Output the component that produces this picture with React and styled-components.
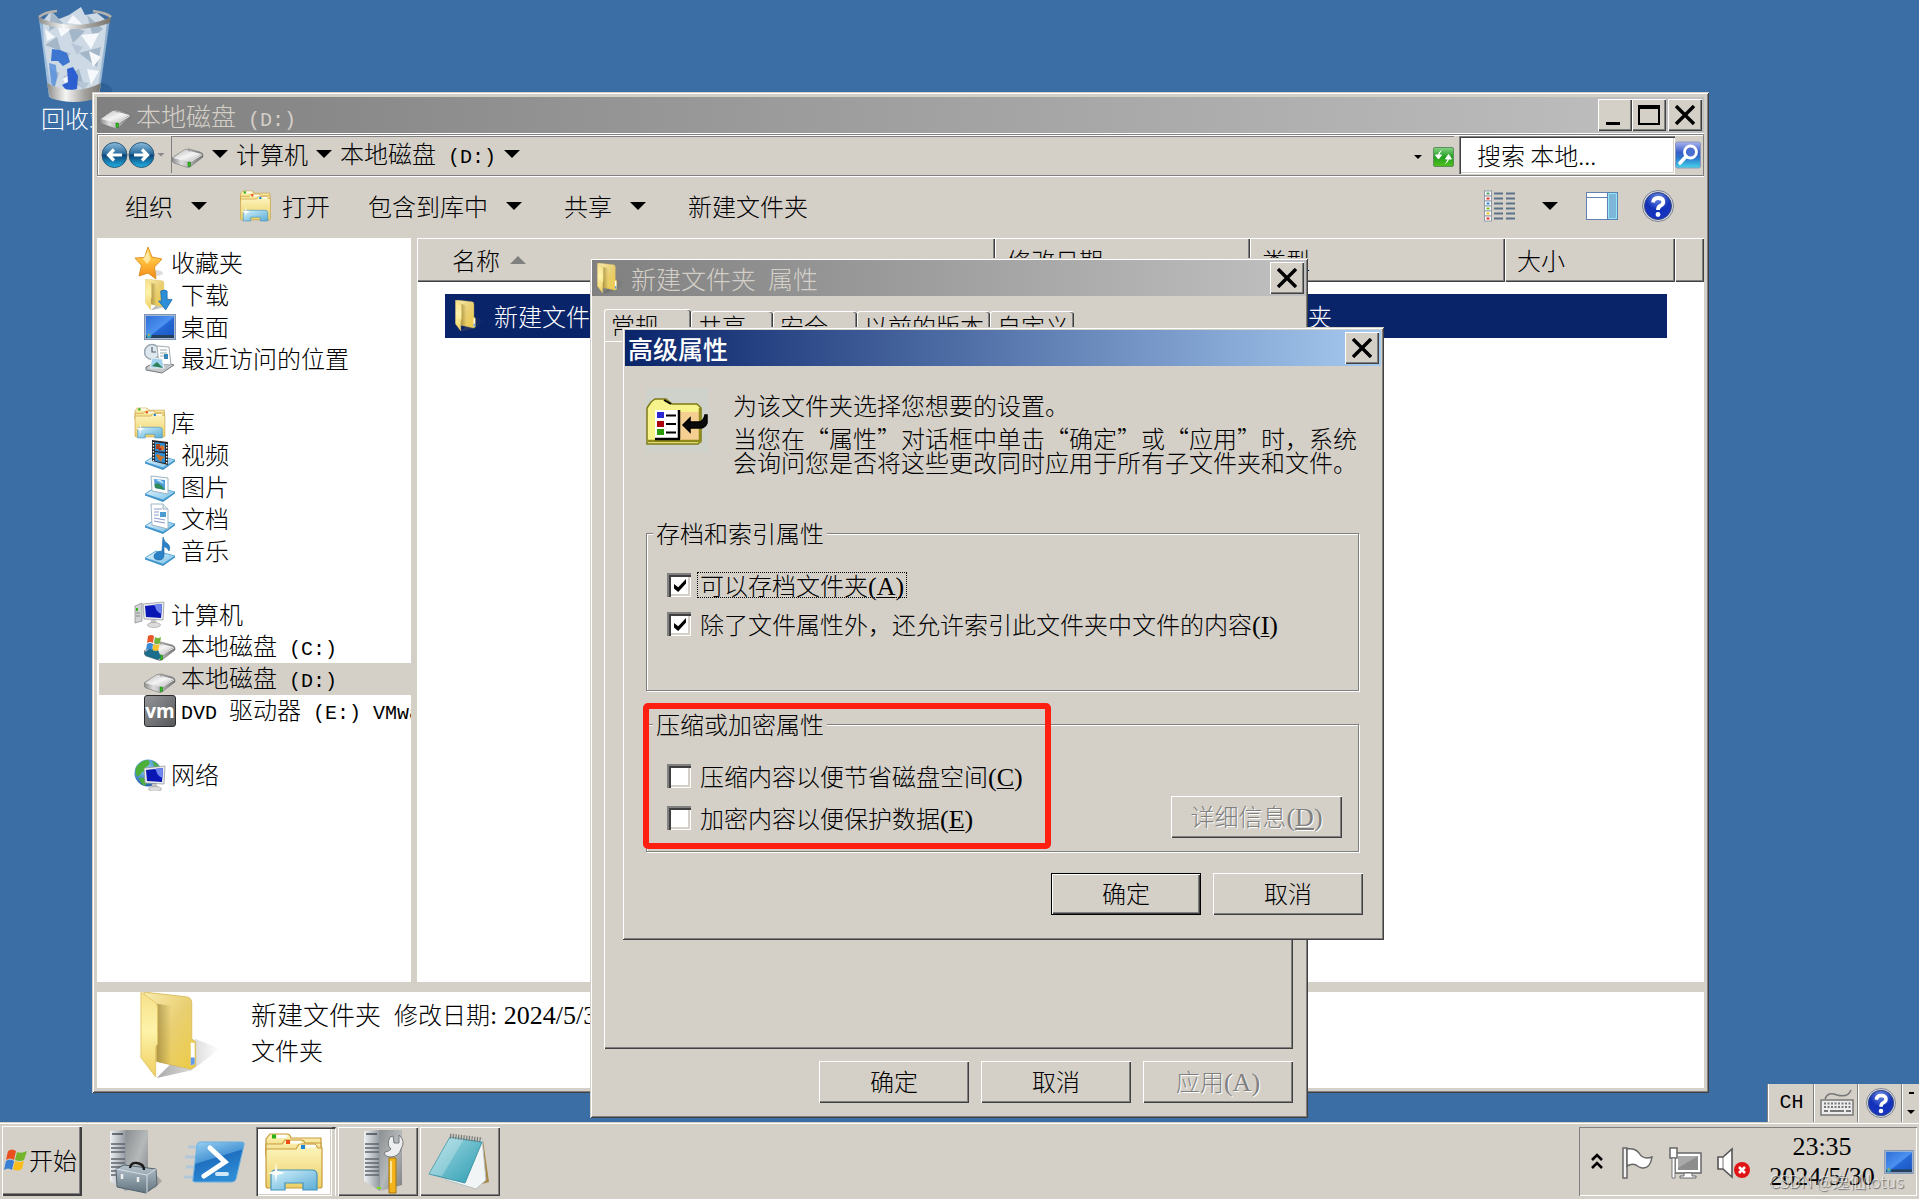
import React from "react";
import styled, { createGlobalStyle, css } from "styled-components";

const FACE = "#d4d0c8";
const SHADOW = "#808080";
const DARK = "#404040";
const NAVY = "#0a246a";

const GlobalStyle = createGlobalStyle`
  *, *::before, *::after { box-sizing: border-box; }
  body {
    margin: 0;
    background: #3a6ea5;
    color: #000;
    font-family: "Noto Sans CJK SC", "Liberation Sans", sans-serif;
    font-size: 24px;
    font-weight: 300;
    line-height: 24px;
  }
  button, input {
    font: inherit;
    color: inherit;
    border: 0;
    border-radius: 0;
    padding: 0;
    margin: 0;
    background: none;
  }
  svg { display: block; flex: none; }
`;

/* ---------- text ---------- */

const Half = styled.span`
  font-family: "Liberation Mono", monospace;
  font-size: 20px;
  line-height: 20px;
  white-space: pre;
`;

const Roman = styled.span`
  font-family: "Liberation Serif", serif;
  font-size: 26px;
  line-height: 20px;
  white-space: pre;
`;

/* Sets the Latin runs of a label in their own face. */
function T({ as: Run = Half, children }) {
  const runs = String(children).match(/[\x20-\x7e]+|[^\x20-\x7e]+/g) || [];
  return runs.map((r, i) => (/^[\x20-\x7e]/.test(r) ? <Run key={i}>{r}</Run> : <React.Fragment key={i}>{r}</React.Fragment>));
}

/* ---------- icons ---------- */

const Folder = ({ h = 32, arrow }) => (
  <svg width={Math.round((h * 84) / 90)} height={h} viewBox="0 0 84 90">
    <defs>
      <linearGradient id="fFlap" x1="0" y1="0" x2="0" y2="1"><stop offset="0" stopColor="#f7e08a" /><stop offset=".45" stopColor="#fdf3a9" /><stop offset="1" stopColor="#efcf60" /></linearGradient>
      <linearGradient id="fBack" x1="0" y1="0" x2="1" y2="1"><stop offset="0" stopColor="#f9ecae" /><stop offset=".5" stopColor="#e9cf72" /><stop offset="1" stopColor="#eccb45" /></linearGradient>
      <linearGradient id="fShade" x1="0" y1="0" x2="1" y2="0"><stop offset="0" stopColor="#9c8436" stopOpacity=".75" /><stop offset="1" stopColor="#9c8436" stopOpacity="0" /></linearGradient>
      <linearGradient id="fDrop" x1="0" y1="0" x2="1" y2="0"><stop offset="0" stopColor="#555" stopOpacity=".5" /><stop offset="1" stopColor="#555" stopOpacity="0" /></linearGradient>
    </defs>
    <path d="M17 88 53 80 82 58 57 48Z" fill="url(#fDrop)" />
    <path d="M4 0 48 5Q53 6 53 11V48L57 51V76L52 79 17 71Z" fill="url(#fBack)" stroke="#d9bd62" />
    <path d="M17 12 32 14V75L17 71Z" fill="url(#fShade)" />
    <path d="M52 52h4v22l-4 1z" fill="#fff" />
    <path d="M52 67h4v7l-4 1z" fill="#5f9bea" />
    <path d="M1 0 16 11Q18 13 18 16V53L16 56V87L1 67Z" fill="url(#fFlap)" stroke="#e3c567" />
    {arrow && <path d="M44 34q10-6 18 0v24h14L58 87 38 62h8z" fill="#2d8fd8" stroke="#1466a8" strokeWidth="2" />}
  </svg>
);

const Drive = ({ win }) => (
  <svg width="32" height="32" viewBox="0 0 32 32">
    <defs>
      <linearGradient id="dTop" x1="0" y1="0" x2="1" y2="1"><stop offset="0" stopColor="#b9b9b9" /><stop offset=".5" stopColor="#f4f4f4" /><stop offset="1" stopColor="#b4b4b4" /></linearGradient>
      <linearGradient id="dSide" x1="0" y1="0" x2="1" y2="0"><stop offset="0" stopColor="#8a8a8a" /><stop offset=".3" stopColor="#dedede" /><stop offset="1" stopColor="#707070" /></linearGradient>
    </defs>
    <path d="M0 20 12 12Q14 11 17 11L28 14Q31 15 31 17V19L18 29Q16 30 14 29L2 25Q0 24 0 22Z" fill="url(#dSide)" stroke="#757575" strokeWidth=".6" />
    <path d="M1 20 13 12 30 16 17 24Z" fill="url(#dTop)" />
    <path d="M16 25 30 17" stroke="#fff" strokeWidth=".8" />
    <circle cx="17" cy="12.500" r=".9" fill="#999" />
    <rect x="16" y="24" width="2.500" height="4.500" fill="#2fbf1b" stroke="#176b0e" strokeWidth=".5" />
    {win && (
      <g>
        <path d="M0 22 6 17 14 19 17 26 14 29 2 25Z" fill="#1c6d8c" />
        <path d="M4 5q3-2 6 0l-1 7q-3-2-6 0z" fill="#e8572a" />
        <path d="M11 6q3 2 6 0l-1 6q-3 2-6 0z" fill="#73b43a" />
        <path d="M3 13q3-2 6 0l-1 6q-3-2-6 0z" fill="#3b8ad8" />
        <path d="M9.500 13q3 2 6 0l-1 6q-3 2-6 0z" fill="#f7c331" />
      </g>
    )}
  </svg>
);

const Star = () => (
  <svg width="32" height="32" viewBox="0 0 32 32">
    <defs><linearGradient id="star" x1="0" y1="0" x2="0" y2="1"><stop offset="0" stopColor="#ffdf6b" /><stop offset=".5" stopColor="#ffb938" /><stop offset="1" stopColor="#f28a18" /></linearGradient></defs>
    <ellipse cx="22" cy="26" rx="7" ry="3" fill="#0002" />
    <path d="M14 0 18 10 28 12 20.500 20 22 32 14 26 5 29 7.500 18.500 1 11 10.500 10.500Z" fill="url(#star)" stroke="#d98a1c" strokeWidth=".9" />
    <path d="M14 4 16.500 12.500 13 17 9 12Z" fill="#fff6c4" opacity=".7" />
  </svg>
);

const DesktopIcon = ({ w = 32, h = 26 }) => (
  <svg width={w} height={h} viewBox="0 0 32 26">
    <defs><linearGradient id="desk" x1="0" y1="0" x2="1" y2="1"><stop offset="0" stopColor="#2f6fd8" /><stop offset=".5" stopColor="#4d92f0" /><stop offset=".55" stopColor="#2567d6" /><stop offset="1" stopColor="#1a56c0" /></linearGradient></defs>
    <rect x=".5" y=".5" width="31" height="25" fill="#aab8d0" stroke="#7f93b5" />
    <rect x="2" y="2" width="28" height="22" fill="url(#desk)" />
    <rect x="2" y="21" width="28" height="3" fill="#24405e" />
    <circle cx="5" cy="21.500" r="2.500" fill="#3aa7c9" />
    <path d="M4 20h1.500v1.500H4z" fill="#f0a030" />
  </svg>
);

const Recent = () => (
  <svg width="32" height="32" viewBox="0 0 32 32">
    <path d="M2 24 14 18 30 22 18 30 2 27Z" fill="#c4c8cb" stroke="#74797d" />
    <circle cx="8" cy="9" r="7.500" fill="#dde7ee" stroke="#9aa8b2" strokeWidth="1.500" />
    <path d="M8 4v5h4" fill="none" stroke="#55626c" strokeWidth="1.200" />
    <path d="M13 3 25 4 27 22 15 21Z" fill="#fff" stroke="#a3abb0" />
    <path d="M16 7h7M16 10h7M16 13h4" stroke="#9aa" strokeWidth="1" />
    <path d="M20 11h4v5h-4z" fill="#3487b8" />
    <path d="M8 15 18 16 20 25 6 25Z" fill="#9fd2ee" stroke="#eee" />
    <path d="M8 23 13 19 19 25Z" fill="#2f7f5b" />
  </svg>
);

const Tray = ({ children }) => (
  <svg width="32" height="32" viewBox="0 0 32 32">
    <defs><linearGradient id="tray" x1="0" y1="0" x2="1" y2="1"><stop offset="0" stopColor="#e9f7ff" /><stop offset="1" stopColor="#76bfe8" /></linearGradient></defs>
    <path d="M1 23 12 16 31 21 19 29Z" fill="url(#tray)" stroke="#5aaad8" />
    <path d="M1 23v1.500L19 31 31 22.500V21L19 29Z" fill="#3f93c8" />
    {children}
  </svg>
);

const Video = () => (
  <Tray>
    <path d="M8 1 24 3V26L8 22Z" fill="#26262a" />
    <path d="M11 3 21 4.500V13L11 12Z" fill="#2f8fd6" />
    <path d="M11 13 21 14.500V24L11 22Z" fill="#2f8fd6" />
    <path d="M12 5h4v5h-4z" fill="#a8461c" /><circle cx="18" cy="9" r="2.500" fill="#d9762c" /><circle cx="16" cy="10" r="1.500" fill="#a82a1c" />
    <path d="M12 16q3-2 5 1l4 1-3 2-1 3-3-3z" fill="#c9742a" />
    <path d="M9.500 3v19M22.700 5v20" stroke="#eee" strokeWidth="1.400" strokeDasharray="1.500 1.500" />
  </Tray>
);
const Picture = () => (
  <Tray>
    <path d="M7 5 24 7V23L8 20Z" fill="#fdfdfd" stroke="#9db4c4" />
    <path d="M10 8 21 9V19L11 17Z" fill="#4f9fdc" />
    <path d="M10.500 13q5-3 10.500 6L11 17Z" fill="#2f8a5c" /><path d="M12 9q5-2 8 4z" fill="#cde8f8" />
  </Tray>
);
const Doc = () => (
  <Tray>
    <path d="M7 1 19 1 24 6V26L8 22Z" fill="#fff" stroke="#9db4c4" />
    <path d="M19 1V6H24" fill="#dfeaf2" stroke="#9db4c4" />
    <path d="M10 6 18 6M10 9h5M10 12h5M10 15 21 17M10 18 21 20" stroke="#8b9bd0" strokeWidth="1.100" />
    <path d="M16 9h6v5h-6z" fill="#4a9bd0" />
  </Tray>
);
const Music = () => (
  <Tray>
    <path d="M19 2q1 5 5 7 3 3 1 7-2-4-5-4.500V20q0 5-5 5t-5-4 8-5z" fill="#2a82c8" stroke="#165f9c" strokeWidth=".6" />
  </Tray>
);

const Library = ({ w = 32, h = 32 }) => (
  <svg width={w} height={h} viewBox="0 0 58 60">
    <defs>
      <linearGradient id="lib" x1="0" y1="0" x2="0" y2="1"><stop offset="0" stopColor="#fdf6c0" /><stop offset="1" stopColor="#ecd067" /></linearGradient>
      <linearGradient id="libB" x1="0" y1="0" x2="1" y2="1"><stop offset="0" stopColor="#d3f1fb" /><stop offset="1" stopColor="#5badd6" /></linearGradient>
    </defs>
    <g fill="url(#lib)" stroke="#c79a3c" strokeWidth="1.200">
      <path d="M1 18V7L5 2H22Q25 2 26 6H56V20H1Z" />
      <path d="M1 24V12H17L20 8H36Q39 8 40 11H56V24Z" />
      <path d="M1 54V17H31L34 12H50L53 16H57V54Q57 56 55 56H3Q1 56 1 54Z" />
    </g>
    <path d="M12 3h10v3H12zM26 9h10v2.500H26zM41 13h10v2.500H41z" fill="#fff" />
    <path d="M7 2.500h4v4H7z" fill="#28b018" /><path d="M21 8h4v4h-4z" fill="#ee4b16" /><path d="M36 13h4v4h-4z" fill="#2384d6" />
    <path d="M6 58V43Q6 38 11 38H47Q52 38 52 43V58H38V51H20V58Z" fill="url(#libB)" stroke="#4593bd" strokeWidth="1.200" />
    <path d="M11 30 12 39 20 41 12 43 11 51 10 43 3 41 10 39Z" fill="#fff" />
  </svg>
);

const Monitor = ({ x = 0, y = 0 }) => (
  <g transform={`translate(${x} ${y})`}>
    <path d="M0 2 21 0 20 18 1 17Z" fill="#e9eaec" stroke="#8c8f96" strokeWidth=".7" />
    <path d="M2 4 19 2 18 16 3 15Z" fill="#0b17b4" />
    <path d="M10 3 19 2 18.500 12Q13 10 12 4Z" fill="#6e85ef" />
    <path d="M8 18h5l1 5H7z" fill="#c4c4c4" />
    <ellipse cx="11" cy="23" rx="6.500" ry="2.500" fill="#dcdcdc" stroke="#999" strokeWidth=".6" />
  </g>
);
const Computer = () => (
  <svg width="32" height="32" viewBox="0 0 32 32">
    <path d="M1 7 8 4V22L1 24Z" fill="#d0d2d5" stroke="#84878c" strokeWidth=".7" />
    <path d="M2 9h2v3H2z" fill="#37b51c" /><path d="M2 14h4M2 17h4" stroke="#888" />
    <Monitor x={9} y={3} />
  </svg>
);
const Network = () => (
  <svg width="32" height="32" viewBox="0 0 32 32">
    <defs><radialGradient id="globe" cx=".4" cy=".3" r=".8"><stop offset="0" stopColor="#8fd6f7" /><stop offset="1" stopColor="#1450a0" /></radialGradient></defs>
    <circle cx="14" cy="14" r="13.500" fill="url(#globe)" />
    <path d="M3 7Q8 1 14 1 18 5 12 8 14 12 8 13 5 18 3 17 0 12 3 7ZM5 19q6-1 8 5l-2 3q-5-3-6-8zM18 2q6 2 8 7l-5-1z" fill="#4caf3a" />
    <Monitor x={10} y={7} />
  </svg>
);
const VmBox = styled.span`
  display: flex; align-items: center; justify-content: center;
  flex: none; width: 32px; height: 32px;
  border: 1px solid #2b2b2d; border-radius: 3px;
  background: linear-gradient(135deg, #929497, #58595c);
  color: #fff; font: bold 19px/28px "Open Sans", sans-serif;
`;

const Bin = () => (
  <svg width="76" height="96" viewBox="0 0 76 96">
    <defs>
      <linearGradient id="rim" x1="0" y1="0" x2="1" y2="0"><stop offset="0" stopColor="#8a8a88" /><stop offset=".35" stopColor="#f6f6f4" /><stop offset=".7" stopColor="#a3a19d" /><stop offset="1" stopColor="#77736e" /></linearGradient>
      <linearGradient id="glass" x1="0" y1="0" x2="1" y2="0"><stop offset="0" stopColor="#8fb4d6" /><stop offset=".5" stopColor="#d4e2ee" /><stop offset="1" stopColor="#86a9cb" /></linearGradient>
    </defs>
    <ellipse cx="60" cy="84" rx="15" ry="9" fill="#1d4a7a" opacity=".35" />
    <path d="M2 12 12 90Q37 98 62 90L73 12Z" fill="url(#glass)" />
    <path d="M6 14 14 4 22 12 32 8 44 0 48 8 60 6 70 14 67 40 61 80Q37 90 14 80L7 38Z" fill="#cdd9e5" />
    <path d="M14 5 26 16 12 24ZM30 18 48 24 36 36ZM50 8 66 22 56 30ZM8 38 20 30 24 44ZM42 46 64 40 60 60ZM26 70 42 62 48 82ZM12 60 22 66 18 80Z" fill="#a4b7c9" />
    <path d="M20 18 34 22 24 30ZM44 28 62 26 54 42ZM50 62 62 64 54 78ZM26 72 34 66 32 84ZM52 44 64 50 56 60ZM8 22 18 30 10 34ZM36 8 46 18 30 16Z" fill="#f6f9fb" />
    <path d="M34 36 46 40 40 48ZM24 44 34 46 30 54ZM40 74 52 76 46 84Z" fill="#b7c6d6" />
    <path d="M15 42 23 43 30 46 33 55 26 59 21 54 14 54Z" fill="#2e6ace" opacity=".9" />
    <path d="M12 56 19 58 20 70 17 82 14 76Z" fill="#5b93dd" opacity=".85" />
    <path d="M30 62 36 60 41 69 40 82 30 84 25 78 31 75Z" fill="#2558cf" opacity=".95" />
    <path d="M10 76Q37 90 64 76L61 91Q37 99 13 91Z" fill="url(#rim)" />
    <path d="M1 10Q37 26 74 10L73 16Q37 28 3 16Z" fill="url(#rim)" />
    <path d="M2 10Q8 5 20 4M56 4Q70 6 74 10" fill="none" stroke="#b5b2ae" strokeWidth="2.500" />
  </svg>
);

const BlueArrow = ({ flip }) => (
  <svg width="27" height="32" viewBox="0 0 27 32">
    <defs><linearGradient id="nav" x1="0" y1="0" x2="0" y2="1"><stop offset="0" stopColor="#8cbcdc" /><stop offset=".45" stopColor="#2b6d9f" /><stop offset=".5" stopColor="#0d4377" /><stop offset="1" stopColor="#21b4e6" /></linearGradient></defs>
    <circle cx="13.500" cy="16" r="12.500" fill="url(#nav)" stroke="#2d5878" />
    <g transform={flip ? "matrix(-1 0 0 1 27 0)" : undefined}>
      <path d="M21 16H8M13 10.500 7.500 16 13 21.500" fill="none" stroke="#fff" strokeWidth="3.200" />
    </g>
  </svg>
);

const Refresh = () => (
  <svg width="21" height="20" viewBox="0 0 21 20">
    <defs><linearGradient id="ref" x1="0" y1="0" x2="0" y2="1"><stop offset="0" stopColor="#86d486" /><stop offset=".5" stopColor="#22a022" /><stop offset="1" stopColor="#52c01e" /></linearGradient></defs>
    <rect x=".5" y=".5" width="20" height="19" rx="1.500" fill="url(#ref)" stroke="#5d8f5d" />
    <path d="M8.500 3.500Q5.500 5 5.500 9M2.500 8h6L5.500 12ZM12.500 16.500Q15.500 15 15.500 11M12.500 12h6L15.500 7.500Z" fill="#fff" stroke="#fff" />
  </svg>
);

const SearchIcon = () => (
  <svg width="26" height="28" viewBox="0 0 26 28">
    <defs><linearGradient id="sea" x1="0" y1="0" x2="0" y2="1"><stop offset="0" stopColor="#a9b4f3" /><stop offset=".4" stopColor="#3a5fc8" /><stop offset=".6" stopColor="#2b74cc" /><stop offset="1" stopColor="#48d6ea" /></linearGradient></defs>
    <rect x=".5" y="1" width="25" height="26" rx="2" fill="url(#sea)" stroke="#8a97b8" />
    <circle cx="15.500" cy="11" r="6" fill="#4a6fd0" stroke="#fff" strokeWidth="2.800" />
    <path d="M11 15.500 5 22" stroke="#fff" strokeWidth="3.600" strokeLinecap="round" />
  </svg>
);

const ViewIcon = () => {
  const dots = ["#5aa36a", "#e2382c", "#2c8be0", "#7bbf1e", "#e6c51c", "#e2382c"];
  return (
    <svg width="32" height="32" viewBox="0 0 32 32">
      {dots.map((c, i) => (
        <g key={c + i}>
          <rect x=".5" y={1 + i * 5} width="7" height="5" fill="#fff" stroke="#8f9bab" />
          <rect x="2.500" y={2.500 + i * 5} width="3" height="2" fill={c} />
          <path d={`M10 ${3.500 + i * 5}h9M22 ${3.500 + i * 5}h9`} stroke="#5b7289" strokeWidth="2" />
        </g>
      ))}
    </svg>
  );
};

const PreviewIcon = () => (
  <svg width="32" height="28" viewBox="0 0 32 28">
    <rect x=".5" y=".5" width="31" height="27" fill="#fff" stroke="#5f81b3" />
    <path d="M1 5.500h20" stroke="#5f81b3" />
    <rect x="21.500" y="1" width="10" height="26" fill="#7eb6d9" stroke="#5f81b3" />
    <path d="M22.500 1.500h8v25h-8z" fill="none" stroke="#8fe9f5" />
  </svg>
);

const Help = ({ size = 32 }) => (
  <svg width={size} height={size} viewBox="0 0 32 32">
    <defs><radialGradient id="help" cx=".5" cy=".2" r=".9"><stop offset="0" stopColor="#6f8fe6" /><stop offset=".5" stopColor="#1231b8" /><stop offset="1" stopColor="#1a35c8" /></radialGradient></defs>
    <circle cx="16" cy="16" r="15.500" fill="#d6dbe4" stroke="#7d8390" />
    <circle cx="16" cy="16" r="13.500" fill="url(#help)" stroke="#38477c" />
    <path d="M11 12.500Q11.500 8 16 8 21.300 8 21.300 12 21.300 14.500 18 16 16 17.200 16 20" fill="none" stroke="#fff" strokeWidth="3.800" />
    <circle cx="16" cy="24.500" r="2.400" fill="#fff" />
  </svg>
);

const AttrFolder = () => (
  <svg width="63" height="65" viewBox="0 0 63 65">
    <rect width="63" height="65" fill="#cfd2ca" />
    <path d="M1 20 5 14 9 11H20L26 16H51L55 20V53L52 56H1Z" fill="#f7f38c" stroke="#7d7a18" strokeWidth="1.500" />
    <path d="M34 24H53V52H28V38Z" fill="#f5cf92" />
    <path d="M2 53H54M54 20V55" stroke="#8e8b1c" strokeWidth="2.500" />
    <path d="M18 12 25 16" stroke="#000" strokeWidth="2" />
    <path d="M9 22H32V51H9Z" fill="#fff" />
    <path d="M33 22V51M9 51H34" stroke="#000" strokeWidth="2.500" />
    <path d="M11 24h7v6h-7z" fill="#2a28d0" /><path d="M11 33h7v6h-7z" fill="#a80510" /><path d="M11 41h7v6h-7z" fill="#2b9a08" />
    <path d="M20 27.500H30M20 36H30M20 44.500H30" stroke="#000" strokeWidth="2.200" />
    <path d="M37 37 44 30V34H53Q58 33 59 27H61V35Q59 40 54 40H44V44Z" fill="#0a0a0a" stroke="#000" strokeWidth="1.500" />
  </svg>
);

const Flag = () => (
  <svg width="36" height="36" viewBox="0 0 36 36">
    <path d="M4 4h4v30H4z" fill="#f3f3f3" stroke="#666" strokeWidth="1.500" />
    <path d="M8 5Q16 4 20 9 24 16 33 13 31 25 23 24 19 23 17 21 13 19 8 22Z" fill="#fff" stroke="#666" strokeWidth="1.500" />
  </svg>
);
const NetTray = () => (
  <svg width="36" height="36" viewBox="0 0 36 36">
    <rect x="8" y="9" width="26" height="20" fill="#fff" stroke="#666" strokeWidth="1.500" />
    <rect x="11" y="12" width="20" height="14" fill="#8d8d8d" /><path d="M11 12h20L11 24z" fill="#a9a9a9" />
    <path d="M17 29h8v3h4v2H13v-2h4z" fill="#fff" stroke="#666" />
    <path d="M3 4h7v10H3z" fill="#fff" stroke="#666" strokeWidth="1.500" /><path d="M5 14h3v20H5z" fill="#fff" stroke="#777" />
  </svg>
);
const Speaker = () => (
  <svg width="36" height="36" viewBox="0 0 36 36">
    <path d="M3 13h5L17 5V33L8 25H3Z" fill="#fff" stroke="#555" strokeWidth="1.600" /><path d="M8 13v12" stroke="#777" />
    <circle cx="27" cy="26" r="8" fill="#e01414" /><path d="M24 23 30 29M30 23 24 29" stroke="#fff" strokeWidth="2.600" />
  </svg>
);
const Keyboard = () => (
  <svg width="34" height="28" viewBox="0 0 34 28">
    <path d="M5 10Q8 2 17 6 28 9 31 1" fill="none" stroke="#777" strokeWidth="1.500" />
    <rect x="1" y="11" width="32" height="15" fill="#ececec" stroke="#777" strokeWidth="1.500" />
    <path d="M4 14.500h27M4 18h27" stroke="#777" strokeWidth="2" strokeDasharray="2 1.500" /><path d="M4 22h4M10 22h14M26 22h5" stroke="#777" strokeWidth="2" />
  </svg>
);
const WinFlag = () => (
  <svg width="24" height="24" viewBox="0 0 24 24">
    <path d="M4 3Q8 0 12 3L10 12Q6 9 2 12Z" fill="#e8501e" /><path d="M13 4Q17 6 23 3L20 12Q16 14 11 12Z" fill="#74b52b" />
    <path d="M2 13Q6 10 10 13L8 22Q4 19 0 22Z" fill="#3a7fd6" /><path d="M11 13Q15 15 20 13L18 21Q13 24 9 21Z" fill="#f9bd1b" />
  </svg>
);

const Tower = ({ x = 0 }) => (
  <g transform={`translate(${x} 0)`}>
    <path d="M16 1H38V56L16 62Z" fill="url(#towSide)" />
    <path d="M0 2 16 1V62L0 52Z" fill="url(#towFront)" />
    <path d="M1 15h14M1 19h14M1 23h14M1 30h14M1 34h14M1 38h14M1 42h14M1 46h14" stroke="#5e646b" strokeWidth="1.600" />
    <path d="M2 5h11" stroke="#3d4248" strokeWidth="1.400" />
  </g>
);
const TowerDefs = () => (
  <defs>
    <linearGradient id="towSide" x1="0" y1="0" x2="1" y2="1"><stop offset="0" stopColor="#8b8f91" /><stop offset=".5" stopColor="#b5b9ba" /><stop offset="1" stopColor="#7c8082" /></linearGradient>
    <linearGradient id="towFront" x1="0" y1="0" x2="1" y2="0"><stop offset="0" stopColor="#eef1f4" /><stop offset="1" stopColor="#8f969d" /></linearGradient>
    <linearGradient id="box" x1="0" y1="0" x2="0" y2="1"><stop offset="0" stopColor="#b5c3cd" /><stop offset="1" stopColor="#647580" /></linearGradient>
  </defs>
);
const ServerManager = () => (
  <svg width="64" height="66" viewBox="0 0 64 66">
    <TowerDefs />
    <Tower x={10} />
    <path d="M54 60 62 52 56 46z" fill="#0003" />
    <path d="M16 40 24 36 56 40 57 56 46 64 17 58Z" fill="url(#box)" stroke="#55646e" />
    <path d="M16 40 47 46 56 40M47 46V64" fill="none" stroke="#d5dee4" />
    <path d="M30 39Q31 33 37 34 44 35 44 41" fill="none" stroke="#1b1b1b" strokeWidth="2.400" />
    <path d="M22 45v5M38 48v5" stroke="#eee" strokeWidth="2.500" />
  </svg>
);
const ServerTools = () => (
  <svg width="64" height="66" viewBox="0 0 64 66">
    <TowerDefs />
    <Tower x={18} />
    <path d="M44 8Q40 16 45 20 44 22 39 23 37 27 44 28 53 28 55 20 60 12 53 6L53 14H48L47 7Z" fill="#eceef0" stroke="#77797c" />
    <path d="M43 29h7v35h-7z" fill="#f3b31b" stroke="#a8740c" /><path d="M45 32v22" stroke="#fff3b8" strokeWidth="1.600" />
    <path d="M31 58h4v2h-4z" fill="#7be01a" />
  </svg>
);
const PowerShell = () => (
  <svg width="64" height="50" viewBox="0 0 64 50">
    <defs><linearGradient id="ps" x1="0" y1="0" x2=".4" y2="1"><stop offset="0" stopColor="#9bd2f3" /><stop offset=".48" stopColor="#4b97d6" /><stop offset=".5" stopColor="#1f70c0" /><stop offset="1" stopColor="#2d8bd4" /></linearGradient></defs>
    <path d="M6 10h10M3 20h12M4 30h8M2 40h12" stroke="#8fc0e8" strokeWidth="3" opacity=".5" />
    <path d="M18 5H60Q63 5 62 8L54 42Q53 45 50 45H13Q10 45 11 42L15 8Q16 5 18 5Z" fill="url(#ps)" stroke="#6bb0e0" />
    <path d="M28 11 43 25 22 39" fill="none" stroke="#fff" strokeWidth="5" strokeLinecap="round" /><path d="M35 37h10" stroke="#cfe8f8" strokeWidth="4" strokeLinecap="round" />
  </svg>
);
const Notepad = () => (
  <svg width="64" height="60" viewBox="0 0 64 60">
    <defs><linearGradient id="np" x1="0" y1="0" x2="1" y2="1"><stop offset="0" stopColor="#a6dce4" /><stop offset=".5" stopColor="#69bccb" /><stop offset="1" stopColor="#2e9db3" /></linearGradient></defs>
    <path d="M55 8 61 50 54 52Z" fill="#a68545" />
    <path d="M54 6 58 48 48 57 18 48 40 20Z" fill="#f2f5f5" stroke="#b5bfc0" />
    <path d="M22 5 54 10 37 51 1 42Z" fill="url(#np)" stroke="#3f97a8" />
    <path d="M22 5 36 7 14 44 1 42Z" fill="#fff" opacity=".25" />
    <path d="M22 4 54 8" stroke="#777" strokeWidth="5" strokeDasharray="1.200 1.500" />
  </svg>
);

const Caret = styled.span`
  flex: none;
  width: ${(p) => (p.$small ? 8 : 16)}px;
  height: ${(p) => (p.$small ? 4 : 8)}px;
  background: ${(p) => p.$color || "#000"};
  clip-path: ${(p) => (p.$up ? "polygon(50% 0, 100% 100%, 0 100%)" : "polygon(0 0, 100% 0, 50% 100%)")};
`;

/* ---------- window chrome ---------- */

const raised = css`
  box-shadow: inset 1px 1px #fff, inset -1px -1px ${DARK}, inset -2px -2px ${SHADOW};
`;

const Desktop = styled.main`
  position: relative;
  display: flex;
  flex-direction: column;
  min-height: 100vh;
  overflow: hidden;
  background: #3a6ea5;
`;

const Shortcut = styled.button`
  display: flex;
  flex-direction: column;
  align-items: flex-start;
  gap: 3px;
  width: 120px;
  padding: 7px 0 0 37px;
  color: #fff;
  text-align: left;
  span { margin-left: 4px; white-space: nowrap; }
`;

const Frame = styled.section`
  position: absolute;
  left: ${(p) => p.$x}px;
  top: ${(p) => p.$y}px;
  width: ${(p) => p.$w}px;
  height: ${(p) => p.$h}px;
  display: flex;
  flex-direction: column;
  padding: ${(p) => p.$pad}px;
  background: ${FACE};
  box-shadow: inset 1px 1px ${FACE}, inset -1px -1px ${DARK}, inset 2px 2px #fff, inset -2px -2px ${SHADOW};
`;

const TitleBar = styled.header`
  display: flex;
  align-items: center;
  flex: none;
  height: 36px;
  padding: 0 2px 0 ${(p) => p.$left || 3}px;
  gap: ${(p) => p.$gap || 0}px;
  color: ${(p) => (p.$active ? "#fff" : FACE)};
  background: ${(p) => (p.$active ? `linear-gradient(90deg, ${NAVY}, #a6caf0)` : "linear-gradient(90deg, #808080, #c0c0c0)")};
  h1 {
    flex: 1;
    margin: 0;
    font-size: 25px;
    font-weight: ${(p) => (p.$active ? 500 : 300)};
    line-height: 32px;
    white-space: nowrap;
  }
`;

const Caption = styled.div`display: flex; gap: 2px;`;
const CaptionPair = styled.div`display: flex;`;
const CaptionButton = styled.button`
  display: flex;
  align-items: center;
  justify-content: center;
  width: 34px;
  height: 32px;
  background: ${FACE};
  ${raised}
`;
const CloseButton = () => (
  <CaptionButton aria-label="关闭">
    <svg width="20" height="20" viewBox="0 0 20 20"><path d="M1 1 19 19M19 1 1 19" stroke="#000" strokeWidth="3.400" /></svg>
  </CaptionButton>
);

/* ---------- explorer ---------- */

const AddressBar = styled.nav`
  display: flex;
  flex: none;
  height: 42px;
  margin-top: 1px;
  padding: 1px 1px 2px 1px;
  border: 1px solid ${SHADOW};
  box-shadow: inset 1px 1px #fff, 0 1px #fff, 0 -1px #fff;
`;
const History = styled.div`
  display: flex;
  align-items: center;
  width: 73px;
  padding-left: 2px;
  border-right: 1px solid ${SHADOW};
  button:nth-child(2) { margin-right: 2px; }
`;
const Crumbs = styled.div`
  display: flex;
  align-items: center;
  flex: 1;
  gap: 8px;
  padding-bottom: 2px;
  border-top: 1px solid ${SHADOW};
  button { white-space: nowrap; }
`;
const Spacer = styled.span`flex: 1;`;
const Refreshing = styled.div`display: flex; align-items: center; gap: 11px; padding-top: 6px;`;
const Search = styled.form`
  display: flex;
  align-items: center;
  width: 243px;
  margin-left: 5px;
  input {
    width: 216px;
    height: 38px;
    padding: 0 18px;
    background: #fff;
    outline: 0;
    box-shadow: inset 1px 1px ${SHADOW}, inset 2px 2px ${DARK}, inset -1px -1px #fff, inset -2px -2px ${FACE};
    &::placeholder { color: #000; opacity: 1; }
  }
`;
const Toolbar = styled.div`
  display: flex;
  align-items: center;
  flex: none;
  height: 62px;
  padding: 0 30px 2px 28px;
`;
const Tool = styled.button`
  display: flex;
  align-items: center;
  gap: ${(p) => p.$gap || 18}px;
  margin-right: ${(p) => p.$after || 0}px;
  white-space: nowrap;
`;
const Panes = styled.div`display: flex; flex: 1; gap: 6px; min-height: 0;`;
const Tree = styled.nav`
  width: 314px;
  padding: 9px 0 0 2px;
  overflow: hidden;
  background: #fff;
  ul { margin: 0 0 32px; padding: 0; list-style: none; }
`;
const Node = styled.a`
  display: flex;
  align-items: center;
  gap: 5px;
  height: 32px;
  padding-left: ${(p) => (p.$child ? 45 : 35)}px;
  background: ${(p) => (p.$selected ? FACE : "transparent")};
  color: inherit;
  text-decoration: none;
  white-space: nowrap;
`;
const NodeText = styled.span`padding-bottom: 2px;`;
const NodeIcon = styled.span`display: flex; justify-content: center; flex: none; width: 32px;`;
const FilePane = styled.div`flex: 1; min-width: 0; background: #fff;`;
const Files = styled.table`
  width: 100%;
  table-layout: fixed;
  border-collapse: separate;
  border-spacing: 0;
  th {
    height: 44px;
    padding: 0 0 0 12px;
    background: ${FACE};
    font-weight: inherit;
    text-align: left;
    ${raised}
  }
  th:first-child { padding-left: 35px; }
  th div { display: flex; align-items: center; gap: 10px; }
  tbody::before { content: ""; display: block; height: 12px; }
  td { height: 44px; padding: 0 10px; white-space: nowrap; }
`;
const Cell = styled.td`background: ${NAVY}; color: #fff;`;
const FileName = styled.div`display: flex; align-items: center; gap: 9px;`;
const Details = styled.footer`
  display: flex;
  flex: none;
  gap: 29px;
  height: 96px;
  margin-top: 10px;
  padding-left: 43px;
  background: #fff;
  overflow: hidden;
  white-space: nowrap;
`;
const DetailText = styled.div`
  display: flex;
  flex-direction: column;
  gap: 10px;
  padding-top: 8px;
  > div { display: flex; align-items: center; gap: 13px; }
  strong { font-size: 26px; font-weight: inherit; line-height: 28px; }
`;

/* ---------- dialogs ---------- */

const Push = styled.button`
  width: ${(p) => p.$w || 150}px;
  height: 42px;
  padding-bottom: 2px;
  background: ${FACE};
  white-space: nowrap;
  ${raised}
  ${(p) => p.$default && css`border: 1px solid #000;`}
  &:disabled { color: ${SHADOW}; text-shadow: 1px 1px #fff; }
`;
const Buttons = styled.div`display: flex; justify-content: flex-end; gap: 12px; margin-top: ${(p) => p.$top}px;`;
const Sheet = styled.div`display: flex; flex-direction: column; flex: 1; padding: 13px 13px 13px 12px;`;
const Tabs = styled.div`display: flex; align-items: flex-end; height: 32px;`;
const Tab = styled.button`
  height: ${(p) => (p.$on ? 32 : 30)}px;
  padding: 0 6px 2px;
  border: solid #fff;
  border-width: 1px 0 0 1px;
  border-radius: 3px 3px 0 0;
  box-shadow: inset -1px 0 ${DARK}, inset -2px 0 ${SHADOW};
  width: ${(p) => p.$w}px;
  text-align: left;
  white-space: nowrap;
`;
const TabPanel = styled.div`flex: 1; ${raised}`;

const Body = styled.div`padding: 22px 18px 21px 21px;`;
const Intro = styled.div`
  display: flex;
  gap: 24px;
  height: 133px;
  div { padding-top: 5px; }
  p { margin: 0 0 9px; white-space: nowrap; }
`;
const Group = styled.fieldset`
  display: block;
  height: ${(p) => p.$h}px;
  margin: 0 4px 21px 0;
  padding: 27px 16px 0 20px;
  border: 1px solid ${SHADOW};
  box-shadow: inset 1px 1px #fff, 1px 1px #fff;
  legend { margin-left: -14px; padding: 0 3px; background: ${FACE}; }
`;
const GroupRow = styled.div`display: flex; justify-content: space-between; align-items: flex-end; height: 75px;`;
const Checks = styled.div`display: flex; flex-direction: column; align-self: flex-start; gap: ${(p) => p.$gap}px;`;
const Check = styled.div`
  display: flex;
  align-items: center;
  gap: 7px;
  height: 26px;
  input {
    appearance: none;
    width: 24px;
    height: 24px;
    background: #fff;
    box-shadow: inset 2px 2px ${SHADOW}, inset 4px 4px ${DARK}, inset -1px -1px #fff, inset -3px -3px ${FACE};
  }
  input:checked::after {
    content: "";
    display: block;
    width: 12px;
    height: 13px;
    margin: 6px 0 0 7px;
    background: #000;
    clip-path: polygon(0 38%, 35% 64%, 100% 0, 100% 34%, 35% 100%, 0 74%);
  }
  label { padding: 0 2px; white-space: nowrap; outline: ${(p) => (p.$focus ? "1px dotted #000" : "0")}; }
  u { text-underline-offset: 2px; text-decoration-thickness: 1px; }
`;
const RedMark = styled.div`
  position: absolute;
  left: 21px;
  top: 376px;
  width: 408px;
  height: 146px;
  border: 6px solid #ff2011;
  border-radius: 5px;
  pointer-events: none;
`;

const Key = ({ k }) => <Roman>(<u>{k}</u>)</Roman>;

function Option({ id, k, checked, focus, children }) {
  return (
    <Check $focus={focus}>
      <input id={id} type="checkbox" defaultChecked={checked} />
      <label htmlFor={id}>{children}<Key k={k} /></label>
    </Check>
  );
}

/* ---------- taskbar ---------- */

const Taskbar = styled.footer`
  position: relative;
  display: flex;
  align-items: stretch;
  height: 77px;
  margin-top: auto;
  padding: 4px 2px 3px 2px;
  background: ${FACE};
  box-shadow: inset 0 1px ${FACE}, inset 0 2px #fff;
`;
const Start = styled.button`
  display: flex;
  align-items: center;
  gap: 1px;
  width: 80px;
  margin-right: 10px;
  padding: 0 0 2px 2px;
  white-space: nowrap;
  box-shadow: inset 1px 1px #fff, inset -2px -2px ${DARK}, inset -3px -3px ${SHADOW};
`;
const Task = styled.button`
  display: flex;
  align-items: center;
  justify-content: center;
  width: ${(p) => (p.$active ? 76 : 80)}px;
  margin: 1px ${(p) => (p.$active ? 0 : 2)}px 0 0;
  ${(p) => p.$open && raised}
  ${(p) => p.$active && css`background: #fff; box-shadow: inset 1px 1px ${SHADOW}, inset 2px 2px ${DARK}, inset -1px -1px #fff, inset -2px -2px ${FACE};`}
`;
const StackEdge = styled.span`
  width: 4px;
  margin: 1px 2px 0 0;
  border-top: 2px solid ${DARK};
  border-right: 1px solid #fff;
`;
const Notify = styled.div`
  display: flex;
  align-items: center;
  width: 338px;
  margin: 1px 0 0 auto;
  padding-left: 12px;
  box-shadow: inset 1px 1px ${SHADOW}, inset -1px -1px #fff;
`;
const TrayButton = styled.button`margin-left: ${(p) => p.$ml || 0}px;`;
const Clock = styled.time`
  display: flex;
  flex-direction: column;
  align-items: center;
  gap: 10px;
  width: 108px;
  margin: 0 8px 0 17px;
`;
const LangBar = styled.div`
  position: absolute;
  right: 0;
  top: -38px;
  display: flex;
  height: 38px;
  background: ${FACE};
  border-left: 1px solid #fff;
`;
const LangCell = styled.button`
  display: flex;
  flex-direction: column;
  align-items: center;
  justify-content: ${(p) => (p.$spread ? "space-around" : "center")};
  width: ${(p) => p.$w}px;
  border-left: 1px solid #fff;
  box-shadow: -1px 0 ${SHADOW};
`;
const Dash = styled.span`width: 5px; height: 2px; background: #000;`;
const Watermark = styled.span`
  position: absolute;
  right: 15px;
  bottom: 6px;
  color: rgba(255, 255, 255, 0.65);
  font-size: 17px;
  text-shadow: 1px 1px 1px rgba(70, 70, 70, 0.8);
  white-space: nowrap;
  pointer-events: none;
`;

const TREE = [
  [["收藏夹", Star], ["下载", "download"], ["桌面", DesktopIcon], ["最近访问的位置", Recent]],
  [["库", Library], ["视频", Video], ["图片", Picture], ["文档", Doc], ["音乐", Music]],
  [["计算机", Computer], ["本地磁盘 (C:)", "system"], ["本地磁盘 (D:)", Drive], ["DVD 驱动器 (E:) VMware Tools", "vm"]],
  [["网络", Network]],
];

function TreeIcon({ kind: Kind }) {
  if (Kind === "download") return <Folder arrow />;
  if (Kind === "system") return <Drive win />;
  if (Kind === "vm") return <VmBox>vm</VmBox>;
  return <Kind />;
}

function Explorer() {
  return (
    <Frame $x={92} $y={92} $w={1617} $h={1001} $pad={5} aria-label="资源管理器">
      <TitleBar $gap={4}>
        <Drive />
        <h1><T>本地磁盘 (D:)</T></h1>
        <Caption>
          <CaptionPair>
            <CaptionButton aria-label="最小化"><svg width="20" height="20"><path d="M1 17h14v4H1z" /></svg></CaptionButton>
            <CaptionButton aria-label="最大化"><svg width="22" height="20"><path d="M1 1h20v18H1z" fill="none" stroke="#000" strokeWidth="2" /><path d="M0 0h22v4H0z" /></svg></CaptionButton>
          </CaptionPair>
          <CloseButton />
        </Caption>
      </TitleBar>
      <AddressBar>
        <History>
          <button aria-label="后退"><BlueArrow /></button>
          <button aria-label="前进"><BlueArrow flip /></button>
          <Caret $small $color="#8a8a8a" />
        </History>
        <Crumbs>
          <Drive />
          <Caret /><button>计算机</button><Caret /><button><T>本地磁盘 (D:)</T></button><Caret />
          <Spacer />
          <Refreshing><Caret $small /><button aria-label="刷新"><Refresh /></button></Refreshing>
        </Crumbs>
        <Search>
          <input aria-label="搜索" placeholder="搜索 本地..." />
          <button type="button" aria-label="开始搜索"><SearchIcon /></button>
        </Search>
      </AddressBar>
      <Toolbar>
        <Tool $after={32}>组织<Caret /></Tool>
        <Tool $gap={10} $after={38}><Library w={33} />打开</Tool>
        <Tool $after={42}>包含到库中<Caret /></Tool>
        <Tool $after={42}>共享<Caret /></Tool>
        <Tool>新建文件夹</Tool>
        <Spacer />
        <Tool $gap={26} $after={28} aria-label="视图"><ViewIcon /><Caret /></Tool>
        <Tool $after={24} aria-label="预览窗格"><PreviewIcon /></Tool>
        <Tool aria-label="帮助"><Help /></Tool>
      </Toolbar>
      <Panes>
        <Tree>
          {TREE.map((group) => (
            <ul key={group[0][0]}>
              {group.map(([name, kind], i) => (
                <li key={name}>
                  <Node href="#" $child={i > 0} $selected={name === "本地磁盘 (D:)"}>
                    <NodeIcon><TreeIcon kind={kind} /></NodeIcon>
                    <NodeText><T>{name}</T></NodeText>
                  </Node>
                </li>
              ))}
            </ul>
          ))}
        </Tree>
        <FilePane>
          <Files>
            <colgroup>
              <col style={{ width: 28 }} /><col /><col style={{ width: 255 }} /><col style={{ width: 255 }} />
              <col style={{ width: 162 }} /><col style={{ width: 8 }} /><col style={{ width: 29 }} />
            </colgroup>
            <thead>
              <tr>
                <th colSpan={2}><div>名称<Caret $up $color="#808080" /></div></th>
                <th>修改日期</th><th>类型</th><th colSpan={2}>大小</th><th />
              </tr>
            </thead>
            <tbody>
              <tr>
                <td />
                <Cell><FileName><Folder />新建文件夹</FileName></Cell>
                <Cell /><Cell>文件夹</Cell><Cell />
                <td /><td />
              </tr>
            </tbody>
          </Files>
        </FilePane>
      </Panes>
      <Details>
        <Folder h={88} />
        <DetailText>
          <div><strong>新建文件夹</strong><span><T as={Roman}>修改日期: 2024/5/30</T></span></div>
          <div>文件夹</div>
        </DetailText>
      </Details>
    </Frame>
  );
}

function Properties() {
  return (
    <Frame $x={590} $y={258} $w={718} $h={860} $pad={2} role="dialog">
      <TitleBar $left={5} $gap={5}>
        <Folder h={31} />
        <h1><T>新建文件夹 属性</T></h1>
        <CloseButton />
      </TitleBar>
      <Sheet>
        <Tabs>
          <Tab $on $w={87}>常规</Tab><Tab $w={82}>共享</Tab><Tab $w={84}>安全</Tab><Tab $w={133}>以前的版本</Tab><Tab $w={84}>自定义</Tab>
        </Tabs>
        <TabPanel />
        <Buttons $top={12}><Push>确定</Push><Push>取消</Push><Push disabled>应用<Roman>(A)</Roman></Push></Buttons>
      </Sheet>
    </Frame>
  );
}

function Advanced() {
  return (
    <Frame $x={622} $y={327} $w={762} $h={613} $pad={3} role="dialog">
      <TitleBar $active>
        <h1>高级属性</h1>
        <CloseButton />
      </TitleBar>
      <Body>
        <Intro>
          <AttrFolder />
          <div>
            <p>为该文件夹选择您想要的设置。</p>
            <p>当您在“属性”对话框中单击“确定”或“应用”时，系统<br />会询问您是否将这些更改同时应用于所有子文件夹和文件。</p>
          </div>
        </Intro>
        <Group $h={170}>
          <legend>存档和索引属性</legend>
          <Checks $gap={13}>
            <Option id="archive" k="A" checked focus>可以存档文件夹</Option>
            <Option id="index" k="I" checked>除了文件属性外，还允许索引此文件夹中文件的内容</Option>
          </Checks>
        </Group>
        <Group $h={140}>
          <legend>压缩或加密属性</legend>
          <GroupRow>
            <Checks $gap={16}>
              <Option id="compress" k="C">压缩内容以便节省磁盘空间</Option>
              <Option id="encrypt" k="E">加密内容以便保护数据</Option>
            </Checks>
            <Push $w={171} disabled>详细信息<Key k="D" /></Push>
          </GroupRow>
        </Group>
        <Buttons $top={0}><Push $default>确定</Push><Push>取消</Push></Buttons>
      </Body>
      <RedMark />
    </Frame>
  );
}

export default function App() {
  return (
    <>
      <GlobalStyle />
      <Desktop>
        <Shortcut><Bin /><span>回收站</span></Shortcut>
        <Explorer />
        <Properties />
        <Advanced />
        <Taskbar>
          <Start><WinFlag />开始</Start>
          <Task aria-label="服务器管理器"><ServerManager /></Task>
          <Task aria-label="PowerShell"><PowerShell /></Task>
          <Task $active aria-label="资源管理器"><Library w={60} h={60} /></Task>
          <StackEdge />
          <Task $open aria-label="管理工具"><ServerTools /></Task>
          <Task $open aria-label="记事本"><Notepad /></Task>
          <Notify>
            <TrayButton aria-label="显示隐藏的图标">
              <svg width="12" height="18" viewBox="0 0 12 18"><path d="M1 7 6 2 11 7M1 15 6 10 11 15" fill="none" stroke="#000" strokeWidth="2.600" /></svg>
            </TrayButton>
            <TrayButton $ml={16} aria-label="操作中心"><Flag /></TrayButton>
            <TrayButton $ml={12} aria-label="网络"><NetTray /></TrayButton>
            <TrayButton $ml={12} aria-label="音量"><Speaker /></TrayButton>
            <Clock><Roman>23:35</Roman><Roman>2024/5/30</Roman></Clock>
            <TrayButton aria-label="显示桌面"><DesktopIcon w={30} h={24} /></TrayButton>
          </Notify>
          <LangBar>
            <LangCell $w={46}><Half>CH</Half></LangCell>
            <LangCell $w={44} aria-label="键盘"><Keyboard /></LangCell>
            <LangCell $w={44} aria-label="帮助"><Help size={30} /></LangCell>
            <LangCell $w={17} $spread aria-label="选项"><Dash /><Caret $small /></LangCell>
          </LangBar>
          <Watermark>CSDN @逸仙lotus</Watermark>
        </Taskbar>
      </Desktop>
    </>
  );
}
